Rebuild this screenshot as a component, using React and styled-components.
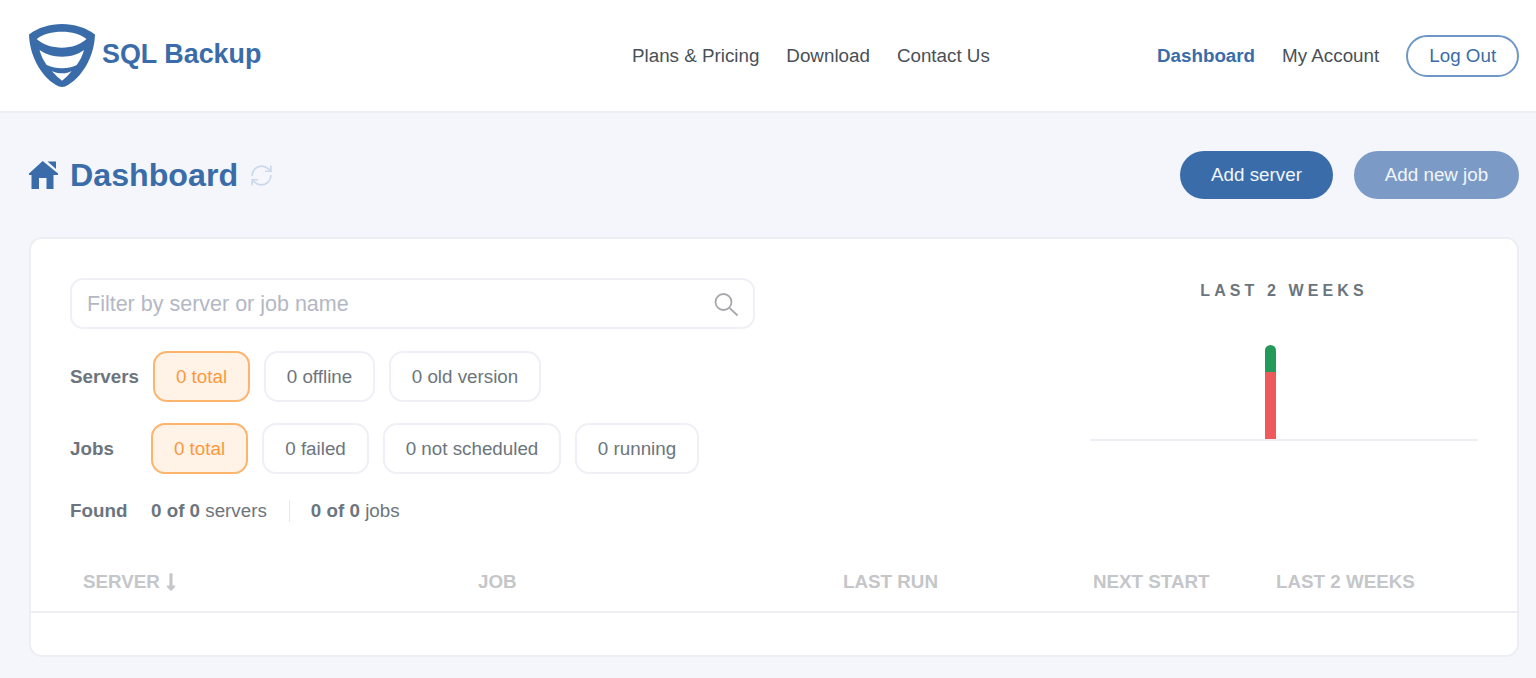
import React from 'react';
import styled, { createGlobalStyle } from 'styled-components';
import { FaLongArrowAltDown } from 'react-icons/fa';
import { RefreshCw } from 'lucide-react';

const Global = createGlobalStyle`
  html, body { margin: 0; padding: 0; background: #f4f6fb; }
  body { font-family: "Liberation Sans", Arial, sans-serif; color: #6c757d; }
  * { box-sizing: border-box; }
`;
const Page = styled.div`min-height: 678px; background: #f4f6fb;`;
const Header = styled.header`
  height: 113px; background: #fff; border-bottom: 2px solid #eceef3;
  display: grid; grid-template-columns: 603px 525px 1fr; align-items: center; padding: 0 17px 0 29px;
`;
const Brand = styled.div`display: flex; align-items: center; gap: 7px; margin-top: -2px;`;
const BrandName = styled.span`font-size: 26.9px; font-weight: 700; color: #3a6ca9;`;
const LogoMark = styled.svg`margin-top: 2px; flex: none;`;
const Nav = styled.nav`display: flex; align-items: center; gap: 27px;`;
const NavLink = styled.span`font-size: 18.8px; color: ${p => p.$active ? '#3a6ca9' : '#495057'}; font-weight: ${p => p.$active ? 700 : 400}; white-space: nowrap;`;
const RightNav = styled(Nav)`justify-content: flex-end;`;
const Logout = styled.span`
  height: 42px; width: 113px; border: 2px solid #6f97c6; border-radius: 21px; color: #3a6ca9;
  display: flex; align-items: center; justify-content: center; font-size: 18.8px;
`;
const Main = styled.main`padding: 38px 17px 21px 29px;`;
const TitleRow = styled.div`display: flex; align-items: center; justify-content: space-between; height: 48px; margin-bottom: 38px;`;
const Title = styled.div`display: flex; align-items: center; color: #3a6ca9;`;
const TitleText = styled.h1`font-size: 32.2px; font-weight: 700; margin: 0 11px 0 12px;`;
const Actions = styled.div`display: flex; gap: 21px;`;
const Pill = styled.button`
  height: 48px; width: ${p => p.$w}px; border: 0; border-radius: 24px; color: #f2f5fa; font: 18.8px "Liberation Sans", Arial, sans-serif;
  background: ${p => p.$muted ? '#7b9bc6' : '#3a6ca9'};
`;
const Card = styled.section`height: 420px; background: #fff; border: 2px solid #eceef4; border-radius: 13px; overflow: hidden;`;
const Top = styled.div`display: grid; grid-template-columns: 685px 388px; justify-content: space-between; padding: 39px 39px 0 39px;`;
const Filters = styled.div`display: flex; flex-direction: column;`;
const SearchBox = styled.div`
  height: 51px; border: 2px solid #eef0f6; border-radius: 13px; display: flex; align-items: center; justify-content: space-between;
  padding: 1px 15px 0 15px; font-size: 21.5px; color: #b4b8c4; margin-bottom: 22px;
`;
const FilterRow = styled.div`display: flex; align-items: center; gap: 14px; margin-bottom: 21px;`;
const RowLabel = styled.span`width: ${p => p.$w}px; font-size: 18.8px; font-weight: 700; color: #6c757d; flex: none;`;
const Chip = styled.span`
  height: 51px; width: ${p => p.$w}px; border-radius: 14px; display: flex; align-items: center; justify-content: center; font-size: 18.8px; white-space: nowrap;
  border: ${p => p.$on ? '2px solid #fdb46c' : '2px solid #eef0f6'};
  background: ${p => p.$on ? '#fff3e8' : '#fff'};
  color: ${p => p.$on ? '#fd983a' : '#6c757d'};
`;
const Found = styled.div`display: flex; align-items: center; font-size: 18.8px; height: 24px; margin-top: 4px;`;
const Strong = styled.b`font-weight: 700;`;
const Sep = styled.span`width: 1px; height: 22px; background: #e6e8f0; margin: 0 21px 0 22px;`;
const ChartCol = styled.div`display: flex; flex-direction: column;`;
const ChartTitle = styled.div`font-size: 16px; font-weight: 700; letter-spacing: 4.1px; text-align: center; color: #6c757d; margin: 4px 0 0 0; height: 18px; line-height: 18px;`;
const Chart = styled.div`display: flex; align-items: flex-end; height: 94px; margin-top: 45px; border-bottom: 2px solid #eceef3; box-sizing: content-box;`;
const Slot = styled.div`flex: 1; display: flex; justify-content: center;`;
const Bar = styled.div`width: 11px; display: flex; flex-direction: column; border-radius: 6px 6px 0 0; overflow: hidden;`;
const Seg = styled.div`height: ${p => p.$h}px; background: ${p => p.$c};`;
const Thead = styled.div`
  display: grid; grid-template-columns: 395px 365px 250px 183px 1fr; padding: 0 0 0 52px; height: 61px; margin-top: 29px; align-items: center;
  border-bottom: 2px solid #eceef4; font-size: 18.8px; font-weight: 700; color: #c4c6c9;
`;
const Th = styled.div`display: flex; align-items: center; white-space: nowrap;`;

const Logo = () => (
  <LogoMark width="66" height="63" viewBox="0 0 66 63" aria-hidden="true">
    <path fillRule="evenodd" fill="#3a6ca9" d="M0 10.5C9 3.5 21 0 33 0s24 3.5 33 10.5c-.5 20-11 41-27 50.5-4 2.5-8 2.5-12 0C11 51.5.5 30.5 0 10.5Z
      M7.7 15C14 10 23 7.7 33 7.7S51 10 57.5 15C51 20.5 43 23.7 33 23.7S14 20.5 7.7 15Z
      M10.5 26C17 30.5 24 32.7 33 32.7S49 30.5 55 26c-1.5 5.5-4 10.5-7.3 15C43 43.3 38.5 44.3 33 44.3S23 43.3 17.7 41C14.5 36.5 12 31.5 10.5 26Z
      M22.7 47c3.3 1.6 6.5 2.3 10.3 2.3S40 48.6 42.7 47C40 50.5 36.5 54 33 56.7 29.5 54 26 50.5 22.7 47Z" />
  </LogoMark>
);

const HomeIcon = () => (
  <svg width="29" height="28" viewBox="0 0 29 28" fill="#3a6ca9" aria-hidden="true">
    <path d="M13.7 0 29 12.5V14H24.5V28H17.5V17H10V28H2.5V14H0V12.5Z" />
    <path d="M18.5.5H27V8Z" />
  </svg>
);

const SearchIcon = () => (
  <svg width="24" height="24" viewBox="0 0 24 24" fill="none" stroke="#a6a8ad" strokeWidth="1.8" strokeLinecap="round" aria-hidden="true">
    <circle cx="9.5" cy="10" r="8" />
    <path d="M15.5 15.8 23 23" />
  </svg>
);

export default function App() {
  return (
    <Page>
      <Global />
      <Header>
        <Brand><Logo /><BrandName>SQL Backup</BrandName></Brand>
        <Nav>
          <NavLink>Plans &amp; Pricing</NavLink>
          <NavLink>Download</NavLink>
          <NavLink>Contact Us</NavLink>
        </Nav>
        <RightNav>
          <NavLink $active>Dashboard</NavLink>
          <NavLink>My Account</NavLink>
          <Logout>Log Out</Logout>
        </RightNav>
      </Header>
      <Main>
        <TitleRow>
          <Title>
            <HomeIcon />
            <TitleText>Dashboard</TitleText>
            <RefreshCw size={25} strokeWidth={1.5} color="#c9d8ea" />
          </Title>
          <Actions>
            <Pill $w={153}>Add server</Pill>
            <Pill $w={165} $muted>Add new job</Pill>
          </Actions>
        </TitleRow>
        <Card>
          <Top>
            <Filters>
              <SearchBox>
                <span>Filter by server or job name</span>
                <SearchIcon />
              </SearchBox>
              <FilterRow>
                <RowLabel $w={69}>Servers</RowLabel>
                <Chip $on $w={97}>0 total</Chip>
                <Chip $w={111}>0 offline</Chip>
                <Chip $w={152}>0 old version</Chip>
              </FilterRow>
              <FilterRow>
                <RowLabel $w={67}>Jobs</RowLabel>
                <Chip $on $w={97}>0 total</Chip>
                <Chip $w={107}>0 failed</Chip>
                <Chip $w={178}>0 not scheduled</Chip>
                <Chip $w={124}>0 running</Chip>
              </FilterRow>
              <Found>
                <RowLabel $w={81}>Found</RowLabel>
                <span><Strong>0 of 0</Strong> servers</span>
                <Sep />
                <span><Strong>0 of 0</Strong> jobs</span>
              </Found>
            </Filters>
            <ChartCol>
              <ChartTitle>LAST 2 WEEKS</ChartTitle>
              <Chart>
                {Array.from({ length: 14 }, (_, i) => (
                  <Slot key={i}>
                    {i === 6 && (
                      <Bar>
                        <Seg $h={27} $c="#23995a" />
                        <Seg $h={67} $c="#ee5a5c" />
                      </Bar>
                    )}
                  </Slot>
                ))}
              </Chart>
            </ChartCol>
          </Top>
          <Thead>
            <Th>SERVER<FaLongArrowAltDown size={20} style={{ marginLeft: 1 }} /></Th>
            <Th>JOB</Th>
            <Th>LAST RUN</Th>
            <Th>NEXT START</Th>
            <Th>LAST 2 WEEKS</Th>
          </Thead>
        </Card>
      </Main>
    </Page>
  );
}
